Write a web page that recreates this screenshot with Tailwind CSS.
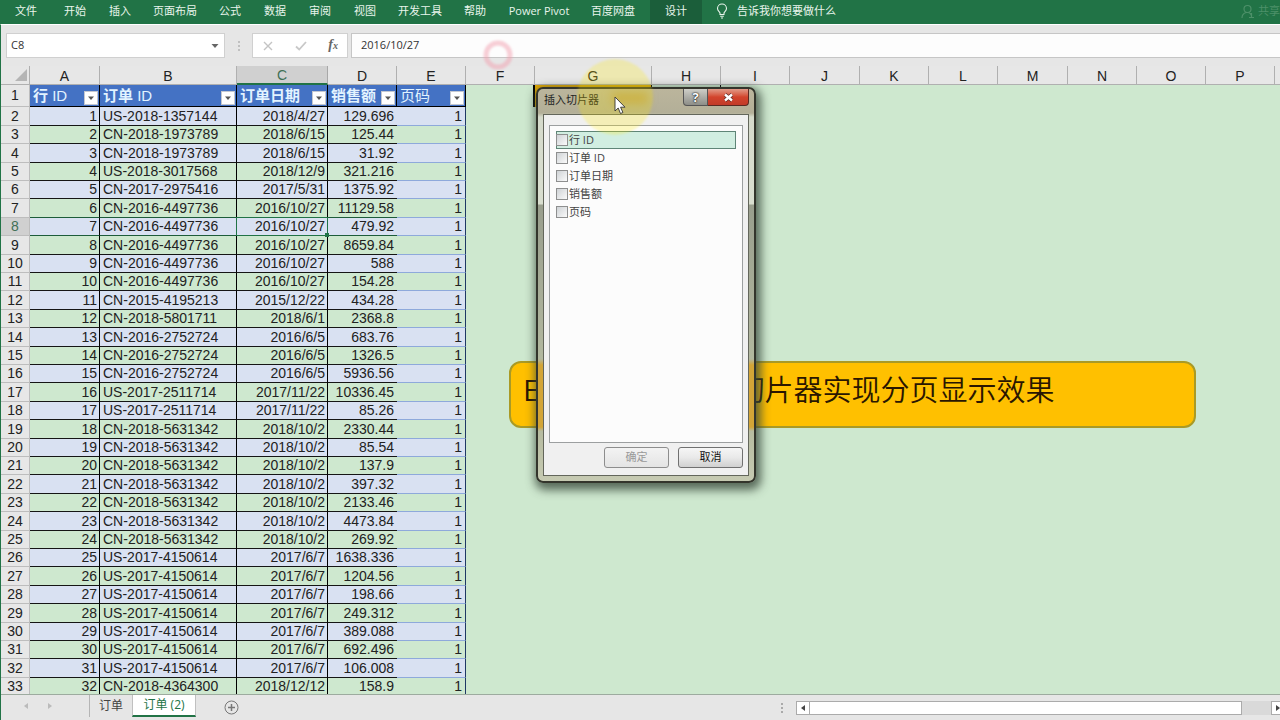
<!DOCTYPE html>
<html lang="zh-CN">
<head>
<meta charset="utf-8">
<title>订单 (2) - Excel</title>
<script src="https://cdn.jsdelivr.net/npm/@tailwindcss/browser@4"></script>
</head>
<body class="bg-[#e6e6e6] font-['Open_Sans','Noto_Sans_CJK_SC',sans-serif] text-[#333]">
<div class="relative flex h-screen flex-col overflow-hidden">

  <nav aria-label="功能区" class="flex h-6 shrink-0 items-stretch bg-[#217346] pl-[7px] text-[11px] leading-[20px] whitespace-nowrap text-[#e9f5ec] *:pb-[2px]">
    <button class="w-[38px]">文件</button>
    <button class="ml-[11px] w-[38px]">开始</button>
    <button class="ml-[7px] w-[38px]">插入</button>
    <button class="ml-[7px] w-[58px]">页面布局</button>
    <button class="ml-[7px] w-[38px]">公式</button>
    <button class="ml-[7px] w-[38px]">数据</button>
    <button class="ml-[7px] w-[38px]">审阅</button>
    <button class="ml-[7px] w-[38px]">视图</button>
    <button class="ml-[7px] w-[58px]">开发工具</button>
    <button class="ml-[7px] w-[38px]">帮助</button>
    <button class="ml-[7px] w-[76px]">Power Pivot</button>
    <button class="ml-[7px] w-[58px]">百度网盘</button>
    <button class="ml-[8px] w-[52px] bg-[#1b5e3a]">设计</button>
    <button class="ml-[13px] flex items-center gap-[8px]">
      <svg class="h-4 w-[14px]" viewBox="0 0 14 16" fill="none" stroke="currentColor" stroke-width="1.1"><path d="M5 11.500V10.300C5 9 2.500 8 2.500 5.500a4.500 4.500 0 0 1 9 0C11.500 8 9 9 9 10.300v1.200zM5.200 13.300h3.600M6 15h2"/></svg>
      <span>告诉我你想要做什么</span>
    </button>
    <div class="grow"></div>
    <button class="flex w-[40px] shrink-0 items-center gap-[3px] text-[#4d9069]">
      <svg class="h-[15px] w-[15px] shrink-0" viewBox="0 0 15 15" fill="none" stroke="currentColor" stroke-width="1.2"><circle cx="7.500" cy="5" r="3.500"/><path d="M2 14c0-3 2-5 4.500-5.500M8.500 8.500c1.500.500 2.500 1.500 3 3M11.500 9v5M9 13.500h5"/></svg>
      <span>共享</span>
    </button>
  </nav>

  <div class="flex min-h-0 grow flex-col border-t border-l border-t-white border-l-[#217346]">
    <div class="mt-2 flex h-[25px] shrink-0 items-stretch pl-[5px] text-[12px]">
      <div class="flex w-[219px] items-center border border-[#d0d0d0] bg-white pr-[5px]">
        <input aria-label="名称框" value="C8" class="min-w-0 grow px-[4px] text-[11px] outline-none">
        <svg class="h-2 w-2" viewBox="0 0 8 8" fill="#666"><path d="M.5 2h7L4 6z"/></svg>
      </div>
      <div class="flex w-[27px] flex-col items-center justify-center gap-[2px]"><i class="size-[2px] bg-[#c0c0c0]"></i><i class="size-[2px] bg-[#c0c0c0]"></i><i class="size-[2px] bg-[#c0c0c0]"></i></div>
      <div class="flex w-[96px] items-center justify-between border border-[#d0d0d0] bg-white pr-[9px] pl-[10px]">
        <button aria-label="取消输入"><svg class="size-[10px]" viewBox="0 0 10 10" stroke="#c4c4c4" stroke-width="1.400"><path d="M1 1l8 8M9 1L1 9"/></svg></button>
        <button aria-label="输入"><svg class="h-[10px] w-3" viewBox="0 0 12 10" fill="none" stroke="#c8c8c8" stroke-width="1.800"><path d="M1 5.500L4.200 8.500 11 1"/></svg></button>
        <button aria-label="插入函数" class="font-['Liberation_Serif',serif] text-[14px] leading-4 font-bold text-[#666] italic">f<span class="text-[10px]">x</span></button>
      </div>
      <input aria-label="编辑栏" value="2016/10/27" class="ml-[3px] min-w-0 grow border-y border-l border-[#c6c6c6] bg-[#fdfdfd] px-[9px] pb-px text-[11px] outline-none">
    </div>

    <div class="relative mt-[8px] min-h-0 grow overflow-hidden border-b border-[#9dab9f] bg-[#cee8cf]">
      <table class="w-[1274px] table-fixed border-separate border-spacing-0 font-['Liberation_Sans','Noto_Sans_CJK_SC',sans-serif] text-[14px] leading-[17px] text-[#222]">
        <colgroup>
          <col class="w-[29px]"><col class="w-[70px]"><col class="w-[137px]"><col class="w-[91px]"><col class="w-[69px]"><col class="w-[69px]">
          <col class="w-[69px]"><col class="w-[117px]"><col class="w-[69px]"><col class="w-[69px]"><col class="w-[70px]"><col class="w-[69px]"><col class="w-[69px]"><col class="w-[70px]"><col class="w-[69px]"><col class="w-[69px]"><col class="w-[69px]">
        </colgroup>
        <thead><tr id="letters" class="h-[19px] bg-[#e7e7e7]"></tr></thead>
        <tbody id="cells"></tbody>
      </table>
      <div class="absolute top-0 left-[1274px] h-[19px] w-full border-b border-[#b0b0b0] bg-[#e7e7e7]"></div>
      <div class="absolute top-[295px] left-[508px] h-[67px] w-[687px] rounded-[12px] border-2 border-[#a99a26] bg-[#ffc000] pt-[3px] pl-[12px] font-['Noto_Sans_CJK_SC',sans-serif] text-[29px] leading-[44px] font-[350] whitespace-nowrap text-[#2a1600]">Excel中如何利用切片器实现分页显示效果</div>
    </div>

    <div class="flex h-[25px] shrink-0 items-start text-[12px]">
      <div class="flex h-[22px] w-[89px] items-center gap-[18px] border-r border-[#b5b5b5] pl-[22px]">
        <button aria-label="上一个工作表"><svg class="size-[6px]" viewBox="0 0 6 6" fill="#bbb"><path d="M5 0v6L1 3z"/></svg></button>
        <button aria-label="下一个工作表"><svg class="size-[6px]" viewBox="0 0 6 6" fill="#bbb"><path d="M1 0v6l4-3z"/></svg></button>
      </div>
      <button class="h-[22px] w-[42px] text-[#444]">订单</button>
      <button class="h-[22px] w-[64px] border-x border-b-2 border-x-[#c0c0c0] border-b-[#217346] bg-white text-[#217346]">订单 (2)</button>
      <button aria-label="新工作表" class="mt-[5px] ml-[28px]"><svg class="size-[15px]" viewBox="0 0 15 15" fill="none" stroke="#777"><circle cx="7.500" cy="7.500" r="6.500"/><path stroke-width="1.500" d="M7.500 4v7M4 7.500h7"/></svg></button>
      <div class="grow"></div>
      <div class="mt-[8px] mr-[13px] flex flex-col gap-[2px]"><i class="size-[2px] bg-[#aaa]"></i><i class="size-[2px] bg-[#aaa]"></i><i class="size-[2px] bg-[#aaa]"></i></div>
      <div class="-mr-[4px] mt-[6px] flex h-[14px] w-[488px] bg-[#d9d9d9]">
        <button aria-label="向左滚动" class="flex w-[14px] items-center justify-center border border-[#ababab] bg-white"><svg class="size-[6px]" viewBox="0 0 6 6" fill="#444"><path d="M5 0v6L1 3z"/></svg></button>
        <div class="w-[432px] border border-l-0 border-[#ababab] bg-white"></div>
        <div class="grow"></div>
        <button aria-label="向右滚动" class="flex w-[13px] items-center justify-center border border-[#ababab] bg-white"><svg class="size-[6px]" viewBox="0 0 6 6" fill="#444"><path d="M1 0v6l4-3z"/></svg></button>
      </div>
    </div>
  </div>

  <div role="dialog" aria-labelledby="dlg-title" class="absolute top-[87px] left-[536px] flex h-[396px] w-[220px] flex-col rounded-[7px] border-2 border-[#33352c] bg-[linear-gradient(#bbb59c_0,#b3af98_24px,#d5dacb_28px,#d9decf_115px,#999e8d_116px,#b2b89f_270px,#d3a537_276px,#d3a537_338px,#b6bba0_342px,#c6cab2)] px-[5px] pb-[5px] text-[11px] shadow-[2px_4px_10px_3px_#3a4a3ccc]">
    <div class="flex h-[25px] shrink-0 items-start justify-between">
      <h2 id="dlg-title" class="pl-px leading-[22px] text-[#222]">插入切片器</h2>
      <div class="flex h-[17px]">
        <button aria-label="帮助" class="w-[25px] rounded-bl-[4px] border border-t-0 border-[#555] bg-linear-to-b from-[#cfcfc8] to-[#8d8e88] text-[13px] leading-4 font-bold text-white [text-shadow:0_0_2px_#000,0_0_1px_#000]">?</button>
        <button aria-label="关闭" class="flex w-[41px] items-center justify-center rounded-br-[4px] border border-t-0 border-l-0 border-[#5b2a22] bg-linear-to-b from-[#e09a88] via-[#d2442c] to-[#c23a28]"><svg class="h-[9px] w-[11px]" viewBox="0 0 11 9"><path d="M2 1.500l7 6M9 1.500l-7 6" stroke="#5c2b26" stroke-width="3.800"/><path d="M2 1.500l7 6M9 1.500l-7 6" stroke="#fff" stroke-width="2.400"/></svg></button>
      </div>
    </div>
    <div class="flex min-h-0 grow flex-col border border-[#63665b] bg-[#f0f0f0] px-[5px] pt-[10px] pb-[7px]">
      <div id="fields" class="grow border border-[#9c9fa0] bg-[#fcfcfc] px-[6px] pt-[5px] text-[#444]"></div>
      <div class="mt-[4px] flex justify-end gap-[9px]">
        <button disabled class="h-[21px] w-[65px] rounded-[3px] border border-[#8d8d8d] bg-linear-to-b from-[#f3f3f3] to-[#e4e4e4] text-[#999]">确定</button>
        <button class="h-[21px] w-[65px] rounded-[3px] border border-[#707070] bg-linear-to-b from-[#f6f6f6] via-[#e9e9e9] to-[#d0d0d0] text-[#111]">取消</button>
      </div>
    </div>
  </div>

  <svg class="pointer-events-none absolute top-[20px] left-[470px] h-[130px] w-[200px]" viewBox="470 20 200 130">
    <defs>
      <filter id="soft" x="-20%" y="-20%" width="140%" height="140%"><feGaussianBlur stdDeviation="1"/></filter>
      <filter id="glow" x="-40%" y="-60%" width="180%" height="220%"><feGaussianBlur stdDeviation="5"/></filter>
    </defs>
    <rect x="612" y="92" width="36" height="12" fill="#c08a00" fill-opacity=".4" filter="url(#glow)"/>
    <circle cx="615" cy="97" r="38" fill="#ffec00" fill-opacity=".24" filter="url(#soft)"/>
    <circle cx="498" cy="55" r="12" fill="none" stroke="#f2a0b0" stroke-opacity=".5" stroke-width="5" filter="url(#soft)"/>
    <path d="M615 97v14l3.200-3 2.300 5.500 2.400-1-2.300-5.300h4.400z" fill="#fff" stroke="#333" stroke-width=".9"/>
  </svg>
</div>

<script>
const orders = `US-2018-1357144 2018/4/27 129.696
CN-2018-1973789 2018/6/15 125.44
CN-2018-1973789 2018/6/15 31.92
US-2018-3017568 2018/12/9 321.216
CN-2017-2975416 2017/5/31 1375.92
CN-2016-4497736 2016/10/27 11129.58
CN-2016-4497736 2016/10/27 479.92
CN-2016-4497736 2016/10/27 8659.84
CN-2016-4497736 2016/10/27 588
CN-2016-4497736 2016/10/27 154.28
CN-2015-4195213 2015/12/22 434.28
CN-2018-5801711 2018/6/1 2368.8
CN-2016-2752724 2016/6/5 683.76
CN-2016-2752724 2016/6/5 1326.5
CN-2016-2752724 2016/6/5 5936.56
US-2017-2511714 2017/11/22 10336.45
US-2017-2511714 2017/11/22 85.26
CN-2018-5631342 2018/10/2 2330.44
CN-2018-5631342 2018/10/2 85.54
CN-2018-5631342 2018/10/2 137.9
CN-2018-5631342 2018/10/2 397.32
CN-2018-5631342 2018/10/2 2133.46
CN-2018-5631342 2018/10/2 4473.84
CN-2018-5631342 2018/10/2 269.92
US-2017-4150614 2017/6/7 1638.336
US-2017-4150614 2017/6/7 1204.56
US-2017-4150614 2017/6/7 198.66
US-2017-4150614 2017/6/7 249.312
US-2017-4150614 2017/6/7 389.088
US-2017-4150614 2017/6/7 692.496
US-2017-4150614 2017/6/7 106.008
CN-2018-4364300 2018/12/12 158.9`.split('\n').map(l => l.split(' '));

document.getElementById('letters').innerHTML =
  `<th class="border-r border-b border-[#b0b0b0] p-0"><svg class="ml-auto mr-[2px] size-[12px]" viewBox="0 0 12 12" fill="#b5b5b5"><path d="M12 0v12H0z"/></svg></th>` +
  [...'ABCDEFGHIJKLMNOP'].map(c => c === 'C'
    ? `<th scope="col" class="border-r border-b-2 border-r-[#a8a8a8] border-b-[#217346] bg-[#d0d0d0] p-0 pt-px leading-[16px] font-normal text-[#3f6f55]">C</th>`
    : `<th scope="col" class="border-r border-b border-[#b0b0b0] p-0 pt-px leading-[16px] font-normal">${c}</th>`).join('');

const head = (t, bold) => `<th scope="col" class="border-r border-b border-black bg-[#4472c4] p-0"><div class="flex items-end justify-between pr-px pl-[3px] text-[15px] leading-[21px] text-[#e2f3ff] ${bold ? 'font-bold' : 'font-normal'}"><span>${t}</span><button aria-label="筛选" class="mb-px flex size-[14px] items-center justify-center border border-[#c4c8d0] bg-white"><svg class="size-[6px]" viewBox="0 0 6 6" fill="#555"><path d="M0 1.500h6L3 5z"/></svg></button></div></th>`;
let rows = `<tr class="h-[22px]"><th scope="row" class="border-r border-b border-[#bdbdbd] bg-[#e7e7e7] p-0 font-normal">1</th>` +
  head('行 <span class="font-normal">ID</span>', true) + head('订单 <span class="font-normal">ID</span>', true) + head('订单日期', true) + head('销售额', true) + head('页码', false) +
  `<td class="border-r-2 border-black p-0"></td><td class="border-r border-black bg-[#e2a800] p-0"></td><td class="border-r border-black p-0"></td></tr>`;

orders.forEach(([id, date, sum], i) => {
  const h = [19, 18, 19, 18, 18][i % 5] === 19 ? 'h-[19px]' : 'h-[18px]';
  const bg = i % 2 ? 'bg-[#cee8cf]' : 'bg-[#d9e1f2]';
  const active = i === 6;
  const line = active || i === 5 ? 'border-b-[#1d5c3a]' : 'border-b-[#151515]';
  rows += `<tr class="${h}">
    <th scope="row" class="border-r border-b border-[#bdbdbd] p-0 font-normal ${active ? 'bg-[#d0d0d0] text-[#3f6f55]' : 'bg-[#e7e7e7]'}">${i + 2}</th>
    <td class="border-r border-b border-r-black p-0 pr-[2px] text-right ${bg} ${line}">${i + 1}</td>
    <td class="border-r border-b border-r-black p-0 pl-[3px] ${bg} ${line}">${id}</td>
    <td class="relative border-r border-b border-r-black p-0 pr-[2px] text-right ${bg} ${line}">${date}${active ? '<div class="absolute -inset-px border border-[#217346]"></div><div class="absolute -right-[2px] -bottom-[2px] z-10 size-[4px] bg-[#217346]"></div>' : ''}</td>
    <td class="border-b p-0 pr-[3px] text-right ${bg} ${line}">${sum}</td>
    <td class="border-r border-b border-r-[#1f3864] border-b-[#8ea9db] p-0 pr-[3px] text-right ${bg}">1</td></tr>`;
});
document.getElementById('cells').innerHTML = rows;

document.getElementById('fields').innerHTML = ['行 ID', '订单 ID', '订单日期', '销售额', '页码'].map((f, i) =>
  `<label class="flex h-[18px] items-center gap-px border leading-4 ${i ? 'border-transparent' : 'border-[#5f8577] bg-[#d1eee1]'}"><input type="checkbox" class="-ml-px size-[12px] appearance-none border border-[#8e8f8f] bg-linear-to-br from-[#cfd3d6] to-[#fafafa]">${f}</label>`).join('');
</script>
</body>
</html>
